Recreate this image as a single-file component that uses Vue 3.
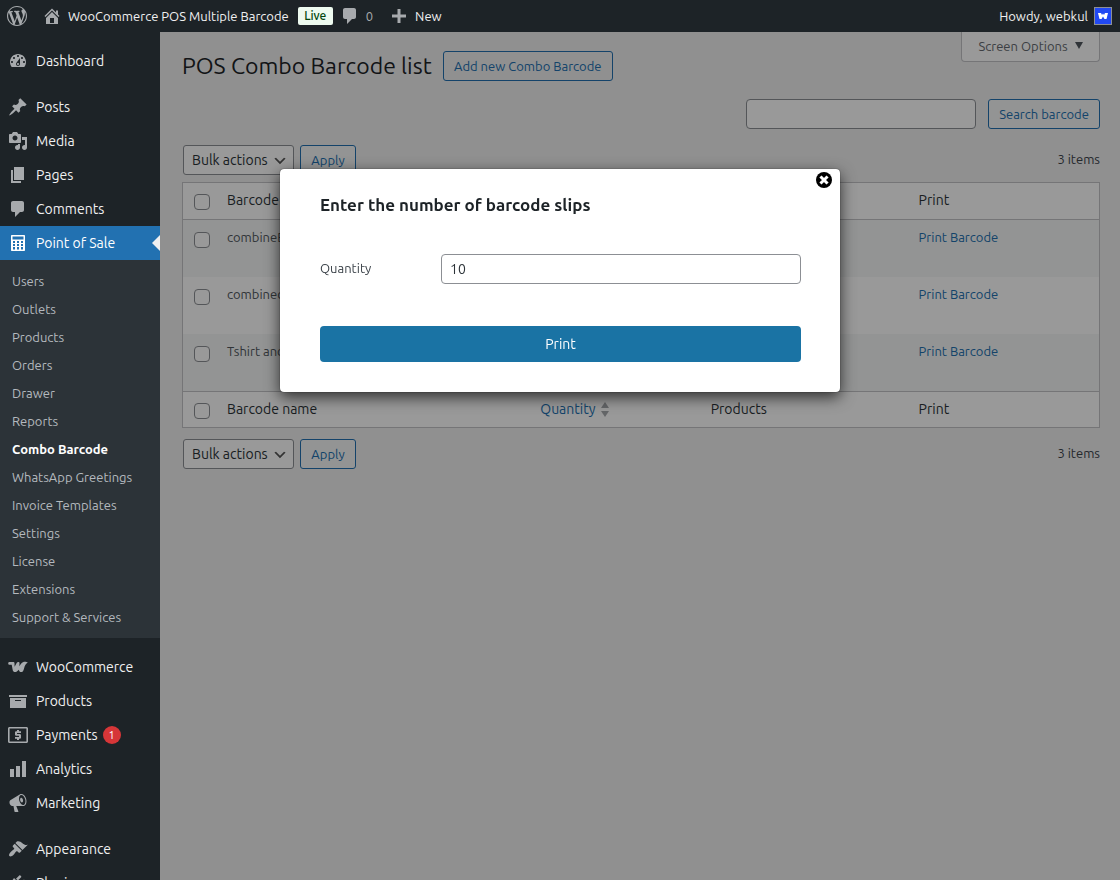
<script setup>
import { ref } from 'vue'

const icons = {
  wordpress: 'M20 10c0-5.51-4.49-10-10-10C4.48 0 0 4.49 0 10c0 5.52 4.48 10 10 10 5.51 0 10-4.48 10-10zM7.78 15.37L4.37 6.22c.55-.02 1.17-.08 1.17-.08.5-.06.44-1.13-.06-1.11 0 0-1.45.11-2.37.11-.18 0-.37 0-.58-.01C4.12 2.69 6.87 1.11 10 1.11c2.33 0 4.45.87 6.05 2.34-.68-.11-1.65.39-1.65 1.58 0 .74.45 1.36.9 2.1.35.61.55 1.36.55 2.46 0 1.49-1.4 5-1.4 5l-3.03-8.37c.54-.02.82-.17.82-.17.5-.05.44-1.25-.06-1.22 0 0-1.44.12-2.38.12-.87 0-2.33-.12-2.33-.12-.5-.03-.56 1.2-.06 1.22l.92.08 1.26 3.41zM17.41 10c.24-.64.74-1.87.43-4.25.7 1.29 1.05 2.71 1.05 4.25 0 3.29-1.73 6.24-4.4 7.78.97-2.59 1.94-5.2 2.92-7.78zM6.1 18.09C3.12 16.65 1.11 13.53 1.11 10c0-1.3.23-2.48.72-3.59C3.25 10.3 4.67 14.2 6.1 18.09zm4.03-6.63l2.58 6.98c-.86.29-1.76.45-2.71.45-.79 0-1.57-.11-2.29-.33.81-2.38 1.62-4.74 2.42-7.1z',
  home: 'M16 8.5l1.53 1.53-1.06 1.06L10 4.6l-6.47 6.49-1.06-1.06L10 2.5l4 4v-2h2v4zm-6-2.46l6 5.99V18H4v-5.97zM12 17v-5H8v5h4z',
  comments: 'M5 2h9c1.1 0 2 .9 2 2v7c0 1.1-.9 2-2 2h-2l-5 5v-5H5c-1.1 0-2-.9-2-2V4c0-1.1.9-2 2-2z',
  plus: 'M17 8.5v3h-5.500v5.500h-3v-5.500H3v-3h5.500V3h3v5.500H17z',
  dashboard: 'M3.76 16h12.48c1.1-1.37 1.76-3.11 1.76-5 0-4.42-3.58-8-8-8s-8 3.58-8 8c0 1.89.66 3.63 1.76 5zM10 4c.55 0 1 .45 1 1s-.45 1-1 1-1-.45-1-1 .45-1 1-1zM6 6c.55 0 1 .45 1 1s-.45 1-1 1-1-.45-1-1 .45-1 1-1zm8 0c.55 0 1 .45 1 1s-.45 1-1 1-1-.45-1-1 .45-1 1-1zm-5.370 5.550L12 7v6c0 1.100-.9 2-2 2s-2-.9-2-2c0-.57.24-1.080.63-1.450zM4 10c.55 0 1 .45 1 1s-.45 1-1 1-1-.45-1-1 .45-1 1-1zm12 0c.55 0 1 .45 1 1s-.45 1-1 1-1-.45-1-1 .45-1 1-1zm-5 3c0-.55-.45-1-1-1s-1 .45-1 1 .45 1 1 1 1-.45 1-1z',
  pin: 'M10.44 3.02l1.82-1.82 6.36 6.35-1.83 1.82c-1.05-.68-2.48-.57-3.41.36l-.75.75c-.92.93-1.04 2.35-.35 3.41l-1.83 1.82-2.41-2.41-2.8 2.79c-.42.42-3.38 2.71-3.8 2.29s1.86-3.39 2.28-3.81l2.79-2.79L4.1 9.36l1.83-1.82c1.05.69 2.48.57 3.4-.36l.75-.75c.93-.92 1.05-2.35.36-3.41z',
  media: 'M13 11V4c0-.55-.45-1-1-1h-1.67L9 1H5L3.67 3H2c-.55 0-1 .45-1 1v7c0 .55.45 1 1 1h10c.55 0 1-.45 1-1zM7 4.5c1.38 0 2.5 1.12 2.5 2.5S8.38 9.5 7 9.5 4.5 8.38 4.5 7 5.62 4.5 7 4.5zM14 6h5v10.5c0 1.38-1.12 2.5-2.5 2.5S14 17.88 14 16.5s1.12-2.5 2.5-2.5c.17 0 .34.02.5.05V9h-3V6zm-4 8.05V13h2v3.5c0 1.38-1.12 2.5-2.5 2.5S7 17.88 7 16.5 8.12 14 9.5 14c.17 0 .34.02.5.05z',
  page: 'M6 15V2h10v13H6zm-1 1h8v2H3V5h2v11z',
  calculator: 'M4 2h12c.6 0 1 .4 1 1v14c0 .6-.4 1-1 1H4c-.6 0-1-.4-1-1V3c0-.6.4-1 1-1zm.5 1.500v3h11v-3h-11zM5 8v2h2V8H5zm4 0v2h2V8H9zm4 0v2h2V8h-2zM5 11v2h2v-2H5zm4 0v2h2v-2H9zm4 0v2h2v-2h-2zM5 14v2.500h2V14H5zm4 0v2.500h2V14H9zm4 0v2.500h2V14h-2z',
  woo: 'M1.400 5H5c1 0 1.500.4 1.500 1.300l.1 3.500 2.200-4c.4-.6.8-.8 1.400-.8.9 0 1.400.5 1.300 1.300l-.2 3C12.400 7.200 13.600 5.800 15 5.200c1.600-.7 3.900-.2 4.800.4-1.900 1.100-3 3-3.900 6.300-.5 1.900-1.300 3.200-2.700 3.200-1.400 0-2.100-.8-2.300-2.300L9.400 14c-.7.8-1.300 1.100-2.200 1.100-1.400 0-2.200-.7-2.500-2.100L3.700 7.800H1.700C.7 7.800.2 7.200.2 6.400S.7 5 1.400 5z',
  archive: 'M19 4v2H1V4h18zM2 7h16v10H2V7zm11 3V9H7v1h6z',
  payments: 'M1.500 2h17c.8 0 1.500.7 1.500 1.500v13c0 .8-.7 1.500-1.500 1.500h-17C.7 18 0 17.300 0 16.500v-13C0 2.700.7 2 1.500 2zM1.600 3.600v12.800h16.800V3.600H1.600zM9 5h2v1.300h2v1.700H9v1.100h3.200l.8.8v3l-.8.8H11V15H9v-1.300H7V12h4v-1.200H7.800L7 10V7.100l.8-.8H9V5z',
  chart: 'M18 18V2h-4v16h4zm-6 0V7H8v11h4zm-6 0v-8H2v8h4z',
  megaphone: 'M18.15 5.94c.46 1.62.38 3.22-.02 4.48-.42 1.28-1.26 2.18-2.3 2.48-.16.06-.26.06-.4.06-.06.02-.12.02-.18.02-.06.02-.14.02-.22.02h-6.8l2.22 5.5c.02.14-.06.26-.14.34-.08.1-.24.16-.34.16H6.95c-.1 0-.26-.06-.34-.16-.08-.08-.16-.2-.14-.34l-1-5.5H4.25l-.02-.02c-.5.06-1.08-.18-1.54-.62s-.88-1.08-1.06-1.88c-.24-.8-.2-1.56-.02-2.2.18-.62.58-1.08 1.06-1.3l.02-.02 9-5.4c.1-.06.18-.1.24-.16.06-.04.14-.08.24-.12.16-.08.28-.12.5-.18 1.04-.3 2.24.1 3.22.98s1.84 2.24 2.26 3.86zm-2.58 5.98h-.02c.4-.1.74-.34 1.04-.7.58-.7.86-1.76.86-3.04 0-.64-.1-1.3-.28-1.98-.34-1.36-1.02-2.5-1.78-3.24s-1.68-1.1-2.46-.88c-.82.22-1.4.96-1.7 2-.32 1.04-.28 2.36.06 3.72.38 1.36 1 2.5 1.8 3.24.78.74 1.62 1.1 2.48.88zm-2.54-7.08c.22-.04.42-.02.62.04.38.16.76.48 1.02 1s.42 1.2.42 1.78c0 .3-.04.56-.12.8-.18.48-.44.84-.86.94-.34.1-.8-.06-1.14-.4s-.64-.86-.78-1.5c-.18-.62-.12-1.24.02-1.72s.48-.84.82-.94z',
  appearance: 'M14.48 11.06L7.41 3.99l1.5-1.5c.5-.56 2.3-.47 3.51.32 1.21.8 1.43 1.28 2.91 2.1 1.18.64 2.45 1.26 4.45.85zm-.71.71L6.7 4.7 4.93 6.47c-.39.39-.39 1.02 0 1.41l1.06 1.06c.39.39.39 1.03 0 1.42-.6.6-1.43 1.11-2.21 1.69-.35.26-.7.53-1.01.84C1.43 14.23.4 16.08 1.4 17.07c.99 1 2.84-.03 4.18-1.36.31-.31.58-.66.85-1.02.57-.78 1.08-1.61 1.69-2.21.39-.39 1.02-.39 1.41 0l1.06 1.06c.39.39 1.02.39 1.41 0z',
  plugins: 'M13.11 4.36L9.87 7.6 8 5.73l3.24-3.24c.35-.34 1.05-.2 1.56.32.52.51.66 1.21.31 1.55zm-8 1.77l.91-1.12 9.01 9.01-1.19.84c-.71.71-2.63 1.16-3.82 1.16H6.14L4.9 17.26c-.59.59-1.54.59-2.12 0-.59-.58-.59-1.53 0-2.12l1.24-1.24v-3.88c0-1.13.4-3.19 1.09-3.89zm7.26 3.97l3.24-3.24c.34-.35 1.04-.21 1.55.31.52.51.66 1.21.31 1.55l-3.24 3.25z'
}

const submenu = [
  'Users', 'Outlets', 'Products', 'Orders', 'Drawer', 'Reports', 'Combo Barcode',
  'WhatsApp Greetings', 'Invoice Templates', 'Settings', 'License', 'Extensions',
  'Support & Services'
]

const menuGroups = [
  [{ label: 'Dashboard', icon: 'dashboard' }],
  [
    { label: 'Posts', icon: 'pin' },
    { label: 'Media', icon: 'media' },
    { label: 'Pages', icon: 'page' },
    { label: 'Comments', icon: 'comments' },
    { label: 'Point of Sale', icon: 'calculator', current: true, children: submenu }
  ],
  [
    { label: 'WooCommerce', icon: 'woo' },
    { label: 'Products', icon: 'archive' },
    { label: 'Payments', icon: 'payments', count: 1 },
    { label: 'Analytics', icon: 'chart' },
    { label: 'Marketing', icon: 'megaphone' }
  ],
  [
    { label: 'Appearance', icon: 'appearance' },
    { label: 'Plugins', icon: 'plugins' }
  ]
]

const rows = ['combineBarcode', 'combinedcode', 'Tshirt and cap']
const search = ref('')
const quantity = ref('10')
const modalOpen = ref(true)
</script>

<template>
  <div class="shell">
    <header class="adminbar">
      <a href="#" class="bar-item bar-logo" aria-label="About WordPress">
        <svg viewBox="0 0 20 20" class="icon"><path :d="icons.wordpress" /></svg>
      </a>
      <a href="#" class="bar-item bar-site">
        <svg viewBox="0 0 20 20" class="icon"><path :d="icons.home" /></svg>
        <span>WooCommerce POS Multiple Barcode</span>
      </a>
      <a href="#" class="live">Live</a>
      <a href="#" class="bar-item bar-comments">
        <svg viewBox="0 0 20 20" class="icon"><path :d="icons.comments" /></svg>
        <span class="zero">0</span>
      </a>
      <a href="#" class="bar-item bar-new">
        <svg viewBox="0 0 20 20" class="icon"><path :d="icons.plus" /></svg>
        <span>New</span>
      </a>
      <a href="#" class="bar-item bar-user">
        <span>Howdy, webkul</span>
        <svg viewBox="0 0 18 18" class="avatar">
          <rect width="18" height="18" fill="#8c8f94" />
          <rect x="1" y="1" width="16" height="16" fill="#2149f3" />
          <path d="M4 6h3l1 2 1-1.500L10 8l1-2h3l-1.500 6h-2L9 9.500 7.500 12h-2z" fill="#fff" />
        </svg>
      </a>
    </header>

    <div class="body">
      <nav class="sidebar">
        <ul v-for="(group, g) in menuGroups" :key="g" class="menu-group">
          <li v-for="item in group" :key="item.label">
            <a href="#" class="menu-link" :class="{ current: item.current }">
              <svg viewBox="0 0 20 20" class="icon"><path fill-rule="evenodd" :d="icons[item.icon]" /></svg>
              <span>{{ item.label }}</span>
              <span v-if="item.count" class="count">{{ item.count }}</span>
            </a>
            <ul v-if="item.children" class="submenu">
              <li v-for="child in item.children" :key="child">
                <a href="#" :class="{ active: child === 'Combo Barcode' }">{{ child }}</a>
              </li>
            </ul>
          </li>
        </ul>
      </nav>

      <main class="content">
        <div class="top">
          <div class="heading">
            <h1>POS Combo Barcode list</h1>
            <a href="#" class="btn add">Add new Combo Barcode</a>
          </div>
          <button type="button" class="screen-options">Screen Options <span class="caret"></span></button>
        </div>

        <form class="search" @submit.prevent>
          <input v-model="search" type="search" class="field" aria-label="Search barcode" />
          <button type="submit" class="btn find">Search barcode</button>
        </form>

        <div class="tablenav">
          <div class="bulk">
            <select aria-label="Bulk actions"><option>Bulk actions</option></select>
            <button type="button" class="btn apply">Apply</button>
          </div>
          <span>3 items</span>
        </div>

        <table>
          <colgroup>
            <col class="c-check" /><col class="c-name" /><col class="c-qty" /><col class="c-products" /><col />
          </colgroup>
          <thead>
            <tr>
              <th><input type="checkbox" aria-label="Select all" /></th>
              <th>Barcode name</th>
              <th><a href="#" class="sort">Quantity <span class="arrows"></span></a></th>
              <th>Products</th>
              <th>Print</th>
            </tr>
          </thead>
          <tbody>
            <tr v-for="row in rows" :key="row">
              <td><input type="checkbox" :aria-label="'Select ' + row" /></td>
              <td>{{ row }}</td>
              <td></td>
              <td></td>
              <td><a href="#" @click.prevent="modalOpen = true">Print Barcode</a></td>
            </tr>
          </tbody>
          <tfoot>
            <tr>
              <th><input type="checkbox" aria-label="Select all" /></th>
              <th>Barcode name</th>
              <th><a href="#" class="sort">Quantity <span class="arrows"></span></a></th>
              <th>Products</th>
              <th>Print</th>
            </tr>
          </tfoot>
        </table>

        <div class="tablenav bottom">
          <div class="bulk">
            <select aria-label="Bulk actions"><option>Bulk actions</option></select>
            <button type="button" class="btn apply">Apply</button>
          </div>
          <span>3 items</span>
        </div>
      </main>
    </div>

    <template v-if="modalOpen">
      <div class="backdrop"></div>
      <div class="modal-layer">
        <form class="modal" role="dialog" aria-labelledby="modal-title" @submit.prevent>
          <button type="button" class="close" aria-label="Close" @click="modalOpen = false">
            <svg viewBox="0 0 16 16">
              <circle cx="8" cy="8" r="8" />
              <path d="M5.500 5.500l5 5M10.500 5.500l-5 5" stroke="#fff" stroke-width="3" stroke-linecap="square" />
            </svg>
          </button>
          <h2 id="modal-title">Enter the number of barcode slips</h2>
          <div class="row">
            <label for="qty">Quantity</label>
            <input id="qty" v-model="quantity" type="text" class="field" />
          </div>
          <button type="submit" class="submit">Print</button>
        </form>
      </div>
    </template>
  </div>
</template>

<style>
body {
  margin: 0;
  background: #f0f0f1;
}
</style>

<style scoped>
.shell {
  height: 100vh;
  overflow: hidden;
  display: flex;
  flex-direction: column;
  font: 13px/20px Ubuntu, "Noto Sans", sans-serif;
  color: #3c434a;
}
.shell * { box-sizing: border-box; }
a { color: #2271b1; text-decoration: none; }
ul { list-style: none; margin: 0; padding: 0; }
button, input, select { font: inherit; }
.icon { width: 20px; height: 20px; fill: #a7aaad; flex: none; }

.adminbar {
  flex: none;
  height: 32px;
  display: flex;
  align-items: center;
  padding: 0 8px 0 7px;
  background: #1d2327;
  position: relative;
  z-index: 20;
}
.bar-item { display: flex; align-items: center; gap: 6px; color: #f0f0f1; white-space: nowrap; }
.bar-site { margin-left: 15px; }
.live {
  margin-left: 9px;
  width: 35px;
  height: 18px;
  border-radius: 2px;
  background: #edfaef;
  color: #00450c;
  font-size: 12px;
  font-weight: 500;
  line-height: 18px;
  text-align: center;
}
.bar-comments { margin-left: 7px; }
.zero { color: #a7aaad; }
.bar-new { margin-left: 16px; }
.bar-user { margin-left: auto; }
.avatar { width: 18px; height: 18px; }

.body { flex: 1; min-height: 0; display: flex; }
.sidebar {
  flex: none;
  width: 160px;
  background: #1d2327;
  position: relative;
  z-index: 20;
}
.menu-group { padding-top: 12px; }
.menu-link {
  display: flex;
  align-items: center;
  gap: 8px;
  height: 34px;
  padding: 0 8px;
  font-size: 14px;
  color: #f0f0f1;
}
.current { position: relative; background: #2271b1; color: #fff; }
.current .icon { fill: #fff; }
.current::after {
  content: "";
  position: absolute;
  right: 0;
  top: 9px;
  border: 8px solid transparent;
  border-left: 0;
  border-right-color: #f0f0f1;
}
.count {
  width: 18px;
  height: 18px;
  margin-left: -3px;
  border-radius: 9px;
  background: #d63638;
  color: #fff;
  font-size: 11px;
  line-height: 18px;
  text-align: center;
}
.submenu { padding: 7px 0; background: #2c3338; }
.submenu a { display: block; padding: 4px 12px; color: #b4b9be; white-space: nowrap; }
.submenu .active { color: #fff; font-weight: 700; }

.content { flex: 1; min-width: 0; padding: 0 20px 0 22px; }
.top { display: flex; justify-content: space-between; align-items: flex-start; }
.heading { display: flex; align-items: center; gap: 11px; padding-top: 19px; }
h1 { margin: 0; font-size: 23px; font-weight: 400; line-height: 30px; color: #1d2327; }
.btn {
  height: 30px;
  padding: 0 10px;
  border: 1px solid #2271b1;
  border-radius: 3px;
  background: #f6f7f7;
  color: #2271b1;
  line-height: 28px;
  text-align: center;
  white-space: nowrap;
}
.add { min-width: 170px; background: none; }
.find { min-width: 112px; }
.apply { min-width: 56px; }
.screen-options {
  display: flex;
  align-items: center;
  justify-content: center;
  gap: 7px;
  min-width: 139px;
  height: 30px;
  padding: 0 15px 2px;
  border: 1px solid #c3c4c7;
  border-top: 0;
  border-radius: 0 0 4px 4px;
  background: #fff;
  color: #646970;
}
.caret { border: 4px solid transparent; border-top: 7px solid #50575e; border-bottom: 0; }
.search { display: flex; justify-content: flex-end; gap: 12px; margin-top: 18px; }
.field {
  height: 30px;
  border: 1px solid #8c8f94;
  border-radius: 4px;
  padding: 0 8px;
  background: #fff;
  color: #2c3338;
  font-size: 14px;
}
.search .field { width: 230px; }

.tablenav { display: flex; justify-content: space-between; padding-left: 1px; margin: 16px 0 7px; line-height: 28px; }
.bottom { margin-top: 11px; }
.bulk { display: flex; gap: 6px; }
select {
  appearance: none;
  width: 111px;
  height: 30px;
  padding: 0 22px 2px 8px;
  border: 1px solid #8c8f94;
  border-radius: 3px;
  color: #2c3338;
  font-size: 14px;
  background: #fff url("data:image/svg+xml;utf8,<svg xmlns='http://www.w3.org/2000/svg' viewBox='0 0 20 20'><path d='M5 6l5 5 5-5 2 1-7 7-7-7 2-1z' fill='%23555'/></svg>") no-repeat right 5px top 7px / 16px 16px;
}

table {
  width: 100%;
  table-layout: fixed;
  border-collapse: separate;
  border-spacing: 0;
  border: 1px solid #c3c4c7;
  background: #fff;
}
.c-check { width: 34px; }
.c-name { width: 34.2%; }
.c-qty { width: 18.6%; }
.c-products { width: 22.7%; }
th {
  padding: 7px 10px 9px;
  text-align: left;
  vertical-align: top;
  font-size: 14px;
  font-weight: 400;
  color: #2c3338;
}
thead th { height: 37px; border-bottom: 1px solid #c3c4c7; }
tfoot th { height: 36px; padding-bottom: 8px; border-top: 1px solid #c3c4c7; }
td { height: 57px; padding: 7px 10px; vertical-align: top; color: #50575e; white-space: nowrap; }
tbody tr:nth-child(odd) { background: #f6f7f7; }
input[type="checkbox"] {
  appearance: none;
  display: block;
  width: 16px;
  height: 16px;
  margin: 4px 0 0 1px;
  border: 1px solid #8c8f94;
  border-radius: 4px;
  background: #fff;
}
td input[type="checkbox"] { margin-top: 5px; }
.sort { display: inline-flex; align-items: center; gap: 6px; }
.arrows { display: grid; gap: 3px; }
.arrows::before, .arrows::after { content: ""; border: 4px solid transparent; }
.arrows::before { border-top: 0; border-bottom: 6px solid #a7aaad; }
.arrows::after { border-bottom: 0; border-top: 6px solid #a7aaad; }

.backdrop { position: fixed; inset: 0; z-index: 10; background: rgba(0, 0, 0, 0.4); }
.modal-layer {
  position: fixed;
  inset: 0;
  z-index: 30;
  display: flex;
  justify-content: center;
  align-items: flex-start;
  padding-top: 169px;
}
.modal {
  position: relative;
  width: 50%;
  min-width: 400px;
  padding: 24px 39px 30px 40px;
  border-radius: 4px;
  background: #fff;
  box-shadow: 0 0 1px #000, 0 5px 15px rgba(0, 0, 0, 0.7);
}
.close {
  position: absolute;
  top: 3px;
  right: 8px;
  width: 16px;
  height: 16px;
  padding: 0;
  border: 0;
  background: none;
}
.close svg { display: block; width: 16px; height: 16px; }
h2 { margin: 0; font-size: 17px; font-weight: 700; line-height: 24px; color: #1d2327; }
.row { display: flex; align-items: center; margin: 37px 0 42px; }
.row label { flex: none; width: 121px; padding-bottom: 2px; }
.row .field { flex: 1; min-width: 0; }
.submit {
  display: block;
  width: 100%;
  height: 36px;
  border: 0;
  border-radius: 4px;
  background: #1a73a4;
  color: #fff;
  font-size: 14px;
}
</style>
